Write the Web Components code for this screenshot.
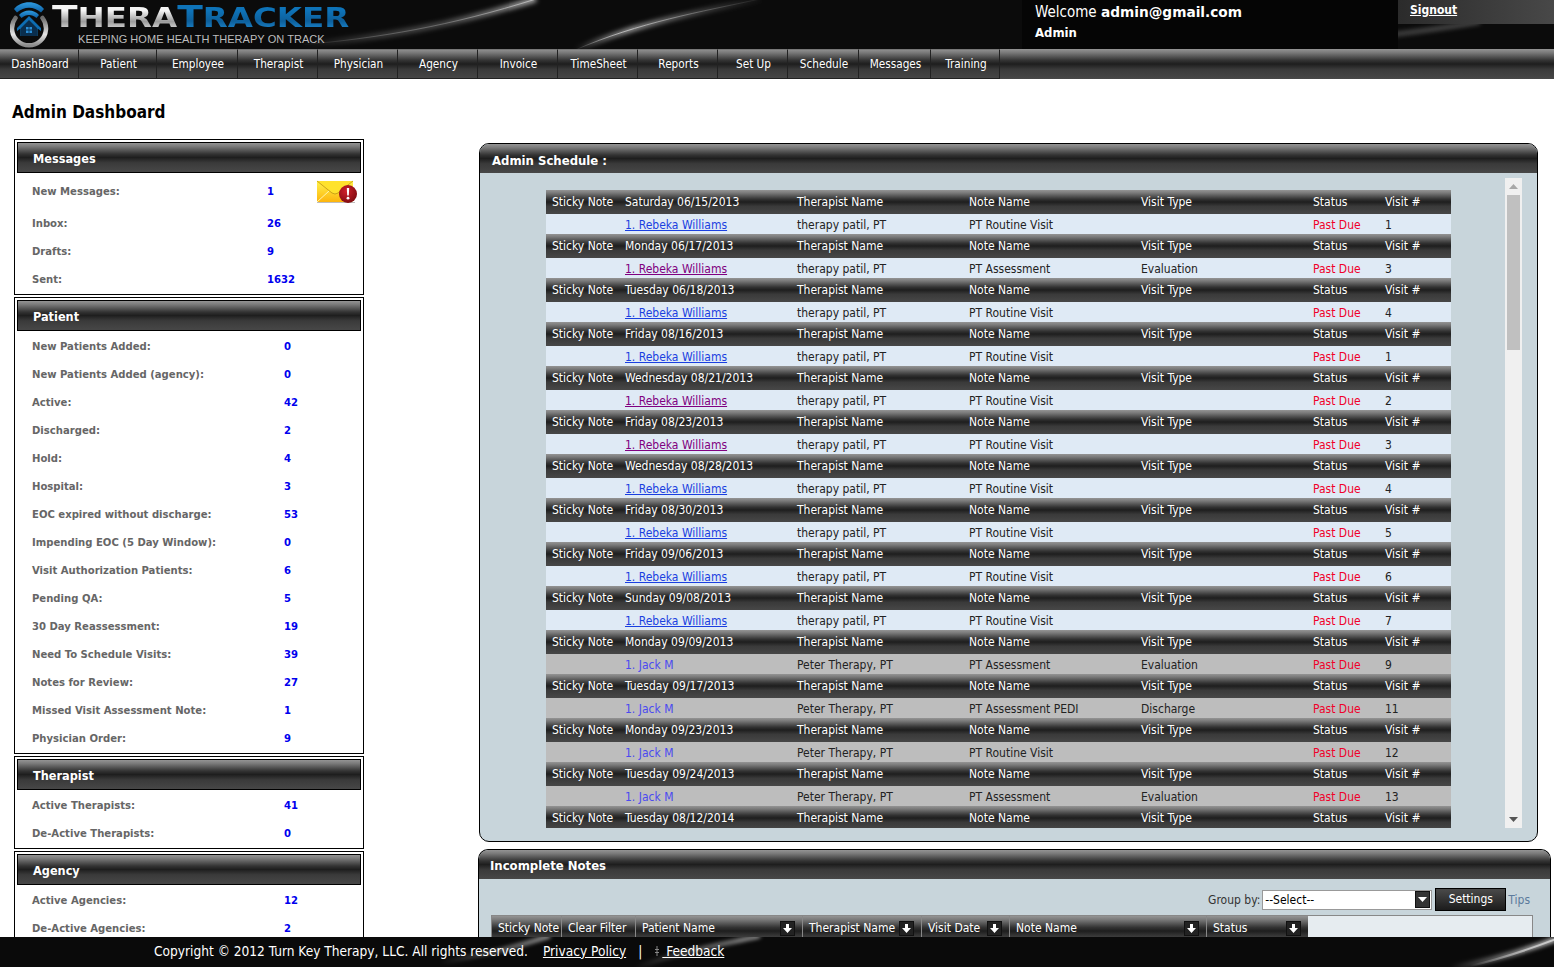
<!DOCTYPE html>
<html lang="en">
<head>
<meta charset="utf-8">
<title>TheraTracker - Admin Dashboard</title>
<style>
html, body { margin: 0; height: 100%; overflow: hidden; background: #fff; }
body { font: 12px "DejaVu Sans Condensed", "DejaVu Sans", sans-serif; }
tt-app { height: 100vh; }
</style>
</head>
<body>

<tt-app>
    <tt-header slot="header"></tt-header>
    <tt-nav slot="nav">
        <tt-nav-item w="79">DashBoard</tt-nav-item>
        <tt-nav-item w="78">Patient</tt-nav-item>
        <tt-nav-item w="81">Employee</tt-nav-item>
        <tt-nav-item w="80">Therapist</tt-nav-item>
        <tt-nav-item w="80">Physician</tt-nav-item>
        <tt-nav-item w="80">Agency</tt-nav-item>
        <tt-nav-item w="80">Invoice</tt-nav-item>
        <tt-nav-item w="80">TimeSheet</tt-nav-item>
        <tt-nav-item w="80">Reports</tt-nav-item>
        <tt-nav-item w="70">Set Up</tt-nav-item>
        <tt-nav-item w="71">Schedule</tt-nav-item>
        <tt-nav-item w="72">Messages</tt-nav-item>
        <tt-nav-item w="69">Training</tt-nav-item>
    </tt-nav>

    <h1 slot="title" style="margin:0;padding:23px 0 17px 12px;font:bold 17px/20px 'DejaVu Sans Condensed','DejaVu Sans',sans-serif;color:#000">Admin Dashboard</h1>

    <div slot="left" style="display:flex;flex-direction:column;gap:2px">
        <tt-panel heading="Messages">
            <tt-stat label="New Messages:" value="1" col="235" tall>
                <tt-mail-icon></tt-mail-icon>
            </tt-stat>
            <tt-stat label="Inbox:" value="26" col="235"></tt-stat>
            <tt-stat label="Drafts:" value="9" col="235"></tt-stat>
            <tt-stat label="Sent:" value="1632" col="235"></tt-stat>
        </tt-panel>
        <tt-panel heading="Patient">
            <tt-stat label="New Patients Added:" value="0"></tt-stat>
            <tt-stat label="New Patients Added (agency):" value="0"></tt-stat>
            <tt-stat label="Active:" value="42"></tt-stat>
            <tt-stat label="Discharged:" value="2"></tt-stat>
            <tt-stat label="Hold:" value="4"></tt-stat>
            <tt-stat label="Hospital:" value="3"></tt-stat>
            <tt-stat label="EOC expired without discharge:" value="53"></tt-stat>
            <tt-stat label="Impending EOC (5 Day Window):" value="0"></tt-stat>
            <tt-stat label="Visit Authorization Patients:" value="6"></tt-stat>
            <tt-stat label="Pending QA:" value="5"></tt-stat>
            <tt-stat label="30 Day Reassessment:" value="19"></tt-stat>
            <tt-stat label="Need To Schedule Visits:" value="39"></tt-stat>
            <tt-stat label="Notes for Review:" value="27"></tt-stat>
            <tt-stat label="Missed Visit Assessment Note:" value="1"></tt-stat>
            <tt-stat label="Physician Order:" value="9"></tt-stat>
        </tt-panel>
        <tt-panel heading="Therapist">
            <tt-stat label="Active Therapists:" value="41"></tt-stat>
            <tt-stat label="De-Active Therapists:" value="0"></tt-stat>
        </tt-panel>
        <tt-panel heading="Agency">
            <tt-stat label="Active Agencies:" value="12"></tt-stat>
            <tt-stat label="De-Active Agencies:" value="2"></tt-stat>
        </tt-panel>
    </div>

    <div slot="right" style="display:flex;flex-direction:column;gap:7px">
        <tt-schedule></tt-schedule>
        <tt-notes></tt-notes>
    </div>

    <tt-footer slot="footer"></tt-footer>
</tt-app>

<script>
(function() {
    const FONT = `"DejaVu Sans Condensed", "DejaVu Sans", sans-serif`;
    const GLOSS = `linear-gradient(#949494 0, #7a7a7a 12%, #333 38%, #1e1e1e 50%, #3a3a3a 68%, #474747 100%)`;

    const SCHEDULE = [
        ['Saturday 06/15/2013', '1. Rebeka Williams', 'therapy patil, PT', 'PT Routine Visit', '', '1', 0],
        ['Monday 06/17/2013', '1. Rebeka Williams', 'therapy patil, PT', 'PT Assessment', 'Evaluation', '3', 1],
        ['Tuesday 06/18/2013', '1. Rebeka Williams', 'therapy patil, PT', 'PT Routine Visit', '', '4', 0],
        ['Friday 08/16/2013', '1. Rebeka Williams', 'therapy patil, PT', 'PT Routine Visit', '', '1', 0],
        ['Wednesday 08/21/2013', '1. Rebeka Williams', 'therapy patil, PT', 'PT Routine Visit', '', '2', 1],
        ['Friday 08/23/2013', '1. Rebeka Williams', 'therapy patil, PT', 'PT Routine Visit', '', '3', 1],
        ['Wednesday 08/28/2013', '1. Rebeka Williams', 'therapy patil, PT', 'PT Routine Visit', '', '4', 0],
        ['Friday 08/30/2013', '1. Rebeka Williams', 'therapy patil, PT', 'PT Routine Visit', '', '5', 0],
        ['Friday 09/06/2013', '1. Rebeka Williams', 'therapy patil, PT', 'PT Routine Visit', '', '6', 0],
        ['Sunday 09/08/2013', '1. Rebeka Williams', 'therapy patil, PT', 'PT Routine Visit', '', '7', 0],
        ['Monday 09/09/2013', '1. Jack M', 'Peter Therapy, PT', 'PT Assessment', 'Evaluation', '9', 2],
        ['Tuesday 09/17/2013', '1. Jack M', 'Peter Therapy, PT', 'PT Assessment PEDI', 'Discharge', '11', 2],
        ['Monday 09/23/2013', '1. Jack M', 'Peter Therapy, PT', 'PT Routine Visit', '', '12', 2],
        ['Tuesday 09/24/2013', '1. Jack M', 'Peter Therapy, PT', 'PT Assessment', 'Evaluation', '13', 2],
        ['Tuesday 08/12/2014']
    ];

    function define(name, markup, extra) {
        const template = document.createElement('template');
        template.innerHTML = markup;
        const cls = class extends HTMLElement {
            constructor() {
                super();
                this.attachShadow({mode: 'open'});
                this.shadowRoot.appendChild(template.content.cloneNode(true));
            }
            connectedCallback() {
                if (extra) extra.call(this, this.shadowRoot);
            }
        };
        customElements.define(name, cls);
    }

    define('tt-app', `
<style>
:host { display: flex; flex-direction: column; }
.main { flex: 1; min-height: 0; overflow: hidden; }
.cols { display: grid; grid-template-columns: 350px 1075px; column-gap: 115px; padding-left: 14px; }
.right { padding-top: 4px; }
</style>
<slot name="header"></slot>
<slot name="nav"></slot>
<div class="main">
    <slot name="title"></slot>
    <div class="cols">
        <div><slot name="left"></slot></div>
        <div class="right"><slot name="right"></slot></div>
    </div>
</div>
<slot name="footer"></slot>
`);

    define('tt-header', `
<style>
:host { display: flex; position: relative; height: 49px; overflow: hidden; background: #0b0b0b; color: #fff; font-family: ${FONT}; }
.swoosh { position: absolute; left: 0; top: 0; }
.logo { position: relative; display: flex; width: 1022px; flex: none; }
.mark { margin: 0 0 0 10px; flex: none; }
.brand { margin-left: 2px; }
.word { font: bold 26px/27px "DejaVu Sans", sans-serif; height: 31px; padding-top: 3px; box-sizing: border-box; white-space: nowrap; transform: scaleX(1.25); transform-origin: 0 0; }
.word span { -webkit-background-clip: text; background-clip: text; color: transparent; }
.big { font-size: 30px; }
.silver { background-image: linear-gradient(#f4f4f4 25%, #9c9c9c 62%, #dedede 90%); }
.blue { background-image: linear-gradient(#0e73b8 25%, #0d5f9b 60%, #1c86cd 90%); }
.tag { margin: 1px 0 0 26px; font: 11px/14px "Liberation Sans", sans-serif; letter-spacing: .05px; color: #bdbdbd; white-space: nowrap; }
.who { position: relative; flex: none; width: 376px; background: #050505; box-sizing: border-box; padding: 2px 0 0 13px; font-size: 15px; line-height: 20px; }
.who b { font-family: "DejaVu Sans", sans-serif; font-size: 13.7px; }
.who .role { font-size: 13px; margin-top: 1px; line-height: 20px; font-weight: bold; }
.out { position: relative; flex: 1; height: 24px; background: linear-gradient(90deg, #2b2b2b, #484848); box-sizing: border-box; padding: 1px 0 0 12px; font: bold 12px/18px ${FONT}; }
.out a { color: #fff; }
</style>
<svg class="swoosh" width="1554" height="49">
    <defs>
        <linearGradient id="a" x1="0" x2="1"><stop offset="0" stop-color="#fff" stop-opacity="0"/><stop offset=".6" stop-color="#999" stop-opacity=".5"/><stop offset="1" stop-color="#bbb"/></linearGradient>
        <linearGradient id="b" x1="0" x2="1"><stop offset="0" stop-color="#fff" stop-opacity="0"/><stop offset=".3" stop-color="#bbb"/><stop offset="1" stop-color="#777" stop-opacity=".1"/></linearGradient>
        <linearGradient id="c" x1="0" x2="1"><stop offset="0" stop-color="#fff" stop-opacity="0"/><stop offset="1" stop-color="#999"/></linearGradient>
        <filter id="s" x="-5%" y="-50%" width="110%" height="200%"><feGaussianBlur stdDeviation="2.5"/></filter>
    </defs>
    <path d="M300 45 C380 38 450 26 536 -1" fill="none" stroke="url(#a)" stroke-width="5" filter="url(#s)"/>
    <path d="M300 45 C380 38 450 26 536 -1" fill="none" stroke="url(#a)" stroke-width="1"/>
    <path d="M575 50 C640 22 700 12 760 -1" fill="none" stroke="url(#b)" stroke-width="4" filter="url(#s)"/>
    <path d="M575 50 C640 22 700 12 760 -1" fill="none" stroke="url(#b)" stroke-width="1"/>
    <path d="M1130 40 C1260 52 1370 40 1480 22" fill="none" stroke="url(#c)" stroke-width="3" filter="url(#s)" opacity=".7"/>
</svg>
<div class="logo">
    <svg class="mark" width="40" height="48" viewBox="0 0 40 48">
        <defs>
            <linearGradient id="ring" x1="0" y1="0" x2="0" y2="1"><stop offset="0" stop-color="#6d6d6d"/><stop offset=".6" stop-color="#e6e6e6"/><stop offset="1" stop-color="#8b8b8b"/></linearGradient>
            <linearGradient id="arc" x1="0" y1="0" x2="0" y2="1"><stop offset="0" stop-color="#2f9be0"/><stop offset="1" stop-color="#0b5fa3"/></linearGradient>
        </defs>
        <path d="M5.5 18 A17 17 0 1 0 32.5 18" fill="none" stroke="url(#ring)" stroke-width="4.5" stroke-linecap="round"/>
        <path d="M4 9 C11 0 27 0 34 9 L31 12.5 C24 6 14 6 7 12.5 Z" fill="url(#arc)"/>
        <path d="M9 15 C14 9 24 9 29 15 L26.5 18 C22 14 16 14 11.5 18 Z" fill="url(#arc)"/>
        <path d="M19 16 L31 28 L31 31 L27.5 28.5 L27.5 36 L10.5 36 L10.5 28.5 L7 31 L7 28 Z" fill="#0d6db2"/>
        <path d="M19 20 L27 28 L27 36 L11 36 L11 28 Z" fill="#0a2e4d"/>
        <path d="M16 27 h6 v6 h-6 z" fill="#2a8fd8"/>
        <path d="M18.6 27 h.8 v6 h-.8 z M16 29.6 h6 v.8 h-6 z" fill="#0a2e4d"/>
    </svg>
    <div class="brand">
        <div class="word"><span class="silver"><span class="big">T</span>HERA</span><span class="blue"><span class="big">T</span>RACKER</span></div>
        <div class="tag">KEEPING HOME HEALTH THERAPY ON TRACK</div>
    </div>
</div>
<div class="who">
    <div>Welcome <b>admin@gmail.com</b></div>
    <div class="role">Admin</div>
</div>
<div class="out"><a href="#">Signout</a></div>
`);

    define('tt-nav', `
<style>
:host { display: flex; height: 30px; background: ${GLOSS}; }
</style>
<slot></slot>
`);

    define('tt-nav-item', `
<style>
:host { display: flex; flex: none; align-items: center; justify-content: center; box-sizing: border-box; height: 30px; padding: 0 0 1px 2px; border-right: 1px solid #222; border-bottom: 1px solid #222; border-top: 1px solid #777; color: #fff; font: 11.7px ${FONT}; }
</style>
<slot></slot>
`, function() {
        this.style.width = this.getAttribute('w') + 'px';
    });

    define('tt-panel', `
<style>
:host { display: block; border: 1px solid #000; padding: 2px 2px 0; background: #fff; }
h2 { margin: 0 0 2px; box-sizing: border-box; height: 31px; padding-left: 15px; border: 1px solid #000; background: ${GLOSS}; color: #fff; font: bold 12.6px/31px ${FONT}; }
</style>
<h2></h2>
<slot></slot>
`, function(root) {
        root.querySelector('h2').textContent = this.getAttribute('heading');
    });

    define('tt-stat', `
<style>
:host { display: flex; align-items: center; box-sizing: border-box; height: 28px; padding: 0 0 1px 15px; font: bold 11.2px ${FONT}; position: relative; }
:host([tall]) { height: 33px; margin-bottom: 2px; }
.label { color: #666; flex: none; }
.value { color: #0000ee; }
::slotted(*) { position: absolute; right: 4px; top: 5px; }
</style>
<span class="label"></span><span class="value"></span><slot></slot>
`, function(root) {
        const label = root.querySelector('.label');
        label.textContent = this.getAttribute('label');
        label.style.width = (this.getAttribute('col') || 252) + 'px';
        root.querySelector('.value').textContent = this.getAttribute('value');
    });

    define('tt-mail-icon', `
<style>
:host { display: block; width: 40px; height: 24px; }
</style>
<svg width="40" height="24" viewBox="0 0 40 24">
    <defs>
        <linearGradient id="env" x1="0" y1="0" x2="0" y2="1"><stop offset="0" stop-color="#fff34a"/><stop offset="1" stop-color="#fdb50e"/></linearGradient>
        <radialGradient id="dot" cx=".4" cy=".35" r=".7"><stop offset="0" stop-color="#d0202a"/><stop offset="1" stop-color="#7d0a10"/></radialGradient>
    </defs>
    <rect x="0" y="1" width="36" height="21" fill="url(#env)"/>
    <path d="M0 1 L15 13 Q18 15 21 13 L36 1" fill="#ffe22c" stroke="#b58a10" stroke-width=".7"/>
    <path d="M0 22 L12 11 M36 22 L24 11" stroke="#fff4b0" stroke-width="1"/>
    <rect x="0" y="22" width="38" height="1" fill="#bdbdbd"/>
    <circle cx="31" cy="14" r="9" fill="url(#dot)"/>
    <path d="M29.8 8 h2.4 l-.4 7.5 h-1.6 z" fill="#fff"/>
    <circle cx="31" cy="18.2" r="1.4" fill="#fff"/>
</svg>
`);

    define('tt-schedule', `
<style>
:host { display: block; margin: 0 16px 0 0; border: 1px solid #000; border-radius: 10px; overflow: hidden; background: #c8d5db; font: 12px ${FONT}; }
.head { height: 29px; padding-left: 12px; background: ${GLOSS}; color: #fff; font: bold 13px/33px ${FONT}; }
.body { display: flex; height: 668px; box-sizing: border-box; padding: 5px 0 13px 66px; }
.pane { width: 905px; height: 650px; overflow: hidden; padding-top: 12px; box-sizing: border-box; flex: none; }
.row { display: grid; grid-template-columns: 79px 172px 172px 172px 172px 72px 66px; align-items: center; white-space: nowrap; }
.row > :first-child { padding-left: 6px; }
.th { height: 24px; background: ${GLOSS}; color: #fff; padding-bottom: 1px; box-sizing: border-box; }
.td { height: 20px; background: #dfeaf5; color: #222; padding-top: 2px; box-sizing: border-box; }
.td.gray { background: #bdbdbd; }
.td a { color: #1a3fe0; }
.td a.seen { color: #800080; }
.td a.plain { color: #4a4af0; text-decoration: none; }
.due { color: #f0002a; }
tt-scrollbar { margin-left: 54px; }
</style>
<div class="head">Admin Schedule :</div>
<div class="body">
    <div class="pane"></div>
    <tt-scrollbar></tt-scrollbar>
</div>
`, function(root) {
        const pane = root.querySelector('.pane');
        const cell = t => `<span>${t}</span>`;
        pane.innerHTML = SCHEDULE.map(r => {
            const head = `<div class="row th">${[
                'Sticky Note', r[0], 'Therapist Name', 'Note Name', 'Visit Type', 'Status', 'Visit #'
            ].map(cell).join('')}</div>`;
            if (r.length < 2) return head;
            const linkClass = ['', 'seen', 'plain'][r[6]];
            return head + `<div class="row td${r[6] === 2 ? ' gray' : ''}">
                <span></span>
                <span><a href="#" class="${linkClass}">${r[1]}</a></span>
                ${cell(r[2])}${cell(r[3])}${cell(r[4])}
                <span class="due">Past Due</span>${cell(r[5])}
            </div>`;
        }).join('');
    });

    define('tt-scrollbar', `
<style>
:host { display: flex; flex-direction: column; align-items: center; flex: none; width: 17px; height: 650px; background: #f0f0f0; }
.arrow { flex: none; height: 17px; display: flex; align-items: center; justify-content: center; }
.thumb { flex: none; width: 13px; height: 155px; background: #c0c0c0; }
.rest { flex: 1; }
</style>
<div class="arrow"><svg width="9" height="5"><path d="M4.5 0 L9 5 H0 Z" fill="#a8a8a8"/></svg></div>
<div class="thumb"></div>
<div class="rest"></div>
<div class="arrow"><svg width="9" height="5"><path d="M0 0 H9 L4.5 5 Z" fill="#555"/></svg></div>
`);

    define('tt-filter-cell', `
<style>
:host { display: flex; align-items: center; justify-content: space-between; flex: none; box-sizing: border-box; height: 26px; margin-top: -1px; padding: 0 7px 0 6px; border-left: 1px solid #888; color: #fff; font: 12px ${FONT}; white-space: nowrap; }
.btn { display: flex; align-items: center; justify-content: center; width: 15px; height: 15px; box-sizing: border-box; background: #222; border: 1px solid #111; }
</style>
<slot></slot>
<span class="btn" hidden><svg width="9" height="9" viewBox="0 0 9 9"><path d="M3 0 H6 V4 H9 L4.5 9 L0 4 H3 Z" fill="#fff"/></svg></span>
`, function(root) {
        this.style.width = this.getAttribute('w') + 'px';
        if (this.hasAttribute('arrow')) root.querySelector('.btn').hidden = false;
        else root.querySelector('.btn').remove();
    });

    define('tt-notes', `
<style>
:host { display: block; border: 1px solid #000; border-bottom: 0; border-radius: 10px 10px 0 0; overflow: hidden; margin: 0 3px 0 -1px; background: #c8d5db; font: 12px ${FONT}; }
.head { height: 29px; padding-left: 11px; background: ${GLOSS}; color: #fff; font: bold 13px/31px ${FONT}; }
.tools { display: flex; justify-content: flex-end; align-items: center; height: 23px; margin-top: 9px; padding-right: 20px; color: #333; }
.sel { display: flex; justify-content: space-between; align-items: center; width: 170px; height: 20px; box-sizing: border-box; margin: 0 3px 0 2px; background: #fff; border: 1px solid #999; padding: 0 1px 0 2px; color: #000; }
.drop { display: flex; align-items: center; justify-content: center; width: 15px; height: 17px; background: #333; border: 1px solid #111; box-sizing: border-box; }
.set { box-sizing: border-box; width: 71px; height: 23px; border: 1px solid #000; background: linear-gradient(#4a4a4a, #1c1c1c); color: #fff; text-align: center; line-height: 21px; }
.tips { margin-left: 2px; color: #5b7a9c; }
.grid { display: flex; height: 30px; margin: 4px 17px 0 12px; border: 1px solid #888; border-left: 0; background: #e6ecf0; }
.cells { display: flex; height: 30px; background: ${GLOSS}; }
</style>
<div class="head">Incomplete Notes</div>
<div class="tools">
    <span>Group by:</span>
    <div class="sel"><span>--Select--</span><span class="drop"><svg width="9" height="5"><path d="M0 0 H9 L4.5 5 Z" fill="#fff"/></svg></span></div>
    <div class="set">Settings</div>
    <span class="tips">Tips</span>
</div>
<div class="grid">
    <div class="cells">
        <tt-filter-cell w="70">Sticky Note</tt-filter-cell>
        <tt-filter-cell w="74">Clear Filter</tt-filter-cell>
        <tt-filter-cell w="167" arrow>Patient Name</tt-filter-cell>
        <tt-filter-cell w="119" arrow>Therapist Name</tt-filter-cell>
        <tt-filter-cell w="88" arrow>Visit Date</tt-filter-cell>
        <tt-filter-cell w="197" arrow>Note Name</tt-filter-cell>
        <tt-filter-cell w="102" arrow>Status</tt-filter-cell>
    </div>
</div>
`);

    define('tt-footer', `
<style>
:host { display: flex; position: relative; align-items: center; height: 30px; flex: none; overflow: hidden; box-sizing: border-box; padding: 0 0 3px 154px; background: #0a0a0a; color: #fff; font: 13.6px "DejaVu Sans Condensed", "DejaVu Sans", sans-serif; white-space: nowrap; }
svg.bg { position: absolute; left: 0; top: 0; }
span, a { position: relative; color: #fff; }
.sep { margin: 0 12px; }
.gap { margin-left: 15px; }
.mark { position: relative; margin-right: 2px; }
</style>
<svg class="bg" width="1554" height="30">
    <defs>
        <linearGradient id="f" x1="1" x2="0"><stop offset="0" stop-color="#ccc"/><stop offset="1" stop-color="#fff" stop-opacity="0"/></linearGradient>
        <filter id="b" x="-20%" y="-50%" width="140%" height="200%"><feGaussianBlur stdDeviation="2"/></filter>
    </defs>
    <path d="M440 26 C480 18 510 12 550 -1" fill="none" stroke="url(#f)" stroke-width="3" filter="url(#b)"/>
    <path d="M635 31 C680 14 720 8 760 -1" fill="none" stroke="url(#f)" stroke-width="3" filter="url(#b)"/>
    <path d="M1470 29 C1500 22 1530 12 1556 2" fill="none" stroke="url(#f)" stroke-width="2"/>
    <path d="M1450 31 C1500 22 1530 12 1556 2" fill="none" stroke="url(#f)" stroke-width="5" filter="url(#b)"/>
</svg>
<span>Copyright © 2012 Turn Key Therapy, LLC. All rights reserved.</span>
<a class="gap" href="#">Privacy Policy</a>
<span class="sep">|</span>
<svg class="mark" width="6" height="10" viewBox="0 0 6 10"><path d="M3 0 V10 M1 3.5 H5 M1 6.5 H5" stroke="#888" stroke-width="1" fill="none"/></svg>
<a href="#">&nbsp;Feedback</a>
`);
})();
</script>
</body>
</html>
